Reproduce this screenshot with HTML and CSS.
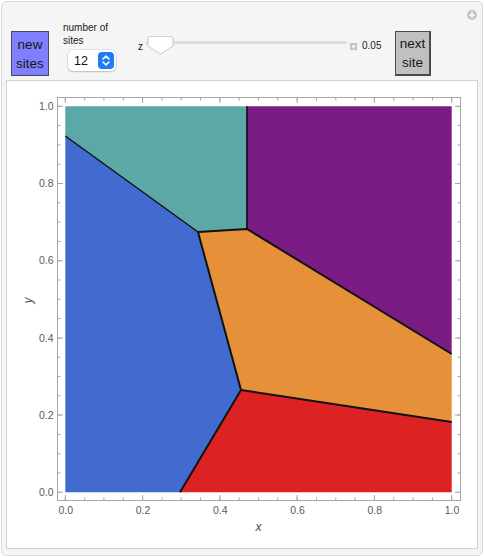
FILE: index.html
```html
<!DOCTYPE html>
<html>
<head>
<meta charset="utf-8">
<link rel="stylesheet" href="styles.css">
</head>
<body>
<div class="panel">
  <div class="controls">
    <button class="btn btn-new">new<br>sites</button>
    <div class="setter">
      <div class="setter-label">number of<br>sites</div>
      <div class="popup">
        <span class="popup-value">12</span>
        <span class="stepper">
          <svg width="16" height="17" viewBox="0 0 16 17"><path d="M5 7 L8 4.2 L11 7 M5 10 L8 12.8 L11 10" fill="none" stroke="#fff" stroke-width="1.6" stroke-linecap="round" stroke-linejoin="round"/></svg>
        </span>
      </div>
    </div>
    <div class="slider-group">
      <span class="slider-name">z</span>
      <div class="slider">
        <div class="track"></div>
        <svg class="thumb" width="28" height="19" viewBox="0 0 28 19"><path d="M3.5 0.5 H23.5 A2.5 2.5 0 0 1 26 3 V10 L13.5 18 L1 10 V3 A2.5 2.5 0 0 1 3.5 0.5 Z" fill="#fff" stroke="#d2d2d2" stroke-width="1"/></svg>
      </div>
      <span class="plus-box"><svg width="7" height="7" viewBox="0 0 7 7"><path d="M3.5 1.5 V5.5 M1.5 3.5 H5.5" stroke="#fff" stroke-width="1.2"/></svg></span>
      <span class="slider-value">0.05</span>
    </div>
    <button class="btn btn-next">next<br>site</button>
    <span class="corner-badge"><svg width="10" height="10" viewBox="0 0 10 10"><circle cx="5" cy="5" r="5" fill="#c4c4c4"/><path d="M5 2.3 V7.7 M2.3 5 H7.7" stroke="#fff" stroke-width="1.6"/></svg></span>
  </div>
  <div class="plot-box">
    <svg class="plot" width="470" height="467" viewBox="7 81 470 467">
      <g class="regions">
        <polygon fill="#5BA8A7" points="65.3,106.3 247,106.3 247,229 198,232 65.3,136"/>
        <polygon fill="#7A1C84" points="247,106.3 451.7,106.3 451.7,354 247,229"/>
        <polygon fill="#E6903A" points="198,232 247,229 451.7,354 451.7,422 241,390"/>
        <polygon fill="#DC2222" points="241,390 451.7,422 451.7,492.3 180,492.3"/>
        <polygon fill="#416BCE" points="65.3,136 198,232 241,390 180,492.3 65.3,492.3"/>
      </g>
      <g fill="none" stroke="#111" stroke-linejoin="round">
        <polyline stroke-width="1.5" points="65.3,136 198,232"/>
        <polyline stroke-width="2" points="198,232 247,229 451.7,354"/>
        <polyline stroke-width="1.7" points="247,106.3 247,229"/>
        <polyline stroke-width="2" points="198,232 241,390 451.7,422"/>
        <polyline stroke-width="2" points="241,390 180,492.3"/>
      </g>
      <rect x="57.5" y="97.5" width="403" height="403" fill="none" stroke="#a6a6a6" stroke-width="1"/>
      <g stroke="#a6a6a6" fill="none">
        <line x1="64.8" y1="498.75" x2="452.2" y2="498.75" stroke-width="2.5" stroke-dasharray="1 18.32"/>
        <line x1="64.8" y1="497.5" x2="452.2" y2="497.5" stroke-width="5" stroke-dasharray="1 76.28"/>
        <line x1="64.8" y1="99.25" x2="452.2" y2="99.25" stroke-width="2.5" stroke-dasharray="1 18.32"/>
        <line x1="64.8" y1="100.5" x2="452.2" y2="100.5" stroke-width="5" stroke-dasharray="1 76.28"/>
        <line x1="59.25" y1="492.8" x2="59.25" y2="105.8" stroke-width="2.5" stroke-dasharray="1 18.3"/>
        <line x1="60.5" y1="492.8" x2="60.5" y2="105.8" stroke-width="5" stroke-dasharray="1 76.2"/>
        <line x1="458.75" y1="492.8" x2="458.75" y2="105.8" stroke-width="2.5" stroke-dasharray="1 18.3"/>
        <line x1="457.5" y1="492.8" x2="457.5" y2="105.8" stroke-width="5" stroke-dasharray="1 76.2"/>
      </g>
      <g class="tick-labels" text-anchor="end">
        <text x="53.5" y="496">0.0</text>
        <text x="53.5" y="418.8">0.2</text>
        <text x="53.5" y="341.6">0.4</text>
        <text x="53.5" y="264.4">0.6</text>
        <text x="53.5" y="187.2">0.8</text>
        <text x="53.5" y="110">1.0</text>
      </g>
      <g class="tick-labels" text-anchor="middle">
        <text x="65.8" y="514">0.0</text>
        <text x="143" y="514">0.2</text>
        <text x="220.3" y="514">0.4</text>
        <text x="297.5" y="514">0.6</text>
        <text x="374.8" y="514">0.8</text>
        <text x="452" y="514">1.0</text>
      </g>
      <text class="axis-label" x="258.5" y="531" text-anchor="middle">x</text>
      <text class="axis-label" x="0" y="0" text-anchor="middle" transform="translate(31.5 300.5) rotate(-90)">y</text>
    </svg>
  </div>
</div>
</body>
</html>
```

FILE: styles.css
```css
html, body {
  margin: 0;
  padding: 0;
  background: #ffffff;
}

body {
  font-family: "Liberation Sans", Arial, sans-serif;
  color: #222;
}

.panel {
  box-sizing: border-box;
  margin: 1px;
  width: 482px;
  height: 555px;
  padding: 0 4px;
  background: #f5f5f5;
  border: 1px solid #dadada;
  border-radius: 5px;
  position: relative;
}

.controls {
  display: flex;
  align-items: flex-start;
  height: 78px;
}

.btn {
  box-sizing: border-box;
  margin: 29px 0 0 0;
  padding: 0;
  height: 45px;
  border: 1px solid #4a4a4a;
  border-radius: 0;
  font-family: "Liberation Sans", Arial, sans-serif;
  font-size: 13.5px;
  line-height: 19px;
  color: #161616;
  text-align: center;
}

.btn-new {
  margin-left: 5px;
  width: 38px;
  background: #8080ff;
}

.btn-next {
  margin-left: 13px;
  width: 36px;
  background: #c0c0c0;
  border-right-width: 2px;
  border-bottom-width: 2px;
}

.setter {
  margin: 19px 0 0 14px;
  width: 53px;
  display: flex;
  flex-direction: column;
}

.setter-label {
  font-size: 10px;
  line-height: 13px;
  color: #222;
  white-space: nowrap;
}

.popup {
  box-sizing: border-box;
  margin: 3px 0 0 5px;
  width: 48px;
  height: 21px;
  background: #ffffff;
  border-radius: 5px;
  box-shadow: 0 0 0 0.5px rgba(0, 0, 0, 0.12), 0 1px 2px rgba(0, 0, 0, 0.18);
  display: flex;
  align-items: flex-start;
  justify-content: space-between;
}

.popup-value {
  padding: 1px 0 0 6px;
  font-size: 12.5px;
  line-height: 21px;
  color: #111;
}

.stepper {
  margin: 2px 2px 0 0;
  width: 16px;
  height: 17px;
  border-radius: 4px;
  background: #1f7cf6;
  display: flex;
}

.slider-group {
  margin: 34px 0 0 22px;
  height: 18px;
  display: flex;
  align-items: flex-start;
}

.slider-name {
  width: 6px;
  margin-top: 5.5px;
  font-size: 10px;
  line-height: 10px;
  color: #222;
}

.slider {
  margin-left: 2px;
  width: 201px;
  height: 18px;
  position: relative;
}

.track {
  margin-top: 5px;
  height: 3px;
  border-radius: 2px;
  background: #dedede;
}

.thumb {
  position: absolute;
  left: 0.5px;
  top: 0;
  filter: drop-shadow(0 0.5px 0.6px rgba(0, 0, 0, 0.22));
}

.plus-box {
  margin: 7px 0 0 3px;
  width: 7px;
  height: 7px;
  background: #c2c2c2;
  display: flex;
}

.slider-value {
  margin: 4.5px 0 0 5px;
  width: 20px;
  font-size: 10px;
  line-height: 10px;
  color: #222;
}

.corner-badge {
  position: absolute;
  left: 465px;
  top: 8px;
  width: 10px;
  height: 10px;
  display: flex;
}

.plot-box {
  box-sizing: border-box;
  width: 472px;
  height: 469px;
  background: #ffffff;
  border: 1px solid #d2d2d2;
}

.plot {
  display: block;
}

.tick-labels text {
  font-family: "Liberation Sans", Arial, sans-serif;
  font-size: 10.5px;
  fill: #5a5a5a;
}

.axis-label {
  font-family: "Liberation Sans", Arial, sans-serif;
  font-style: italic;
  font-size: 12px;
  fill: #4a4a4a;
}
```
